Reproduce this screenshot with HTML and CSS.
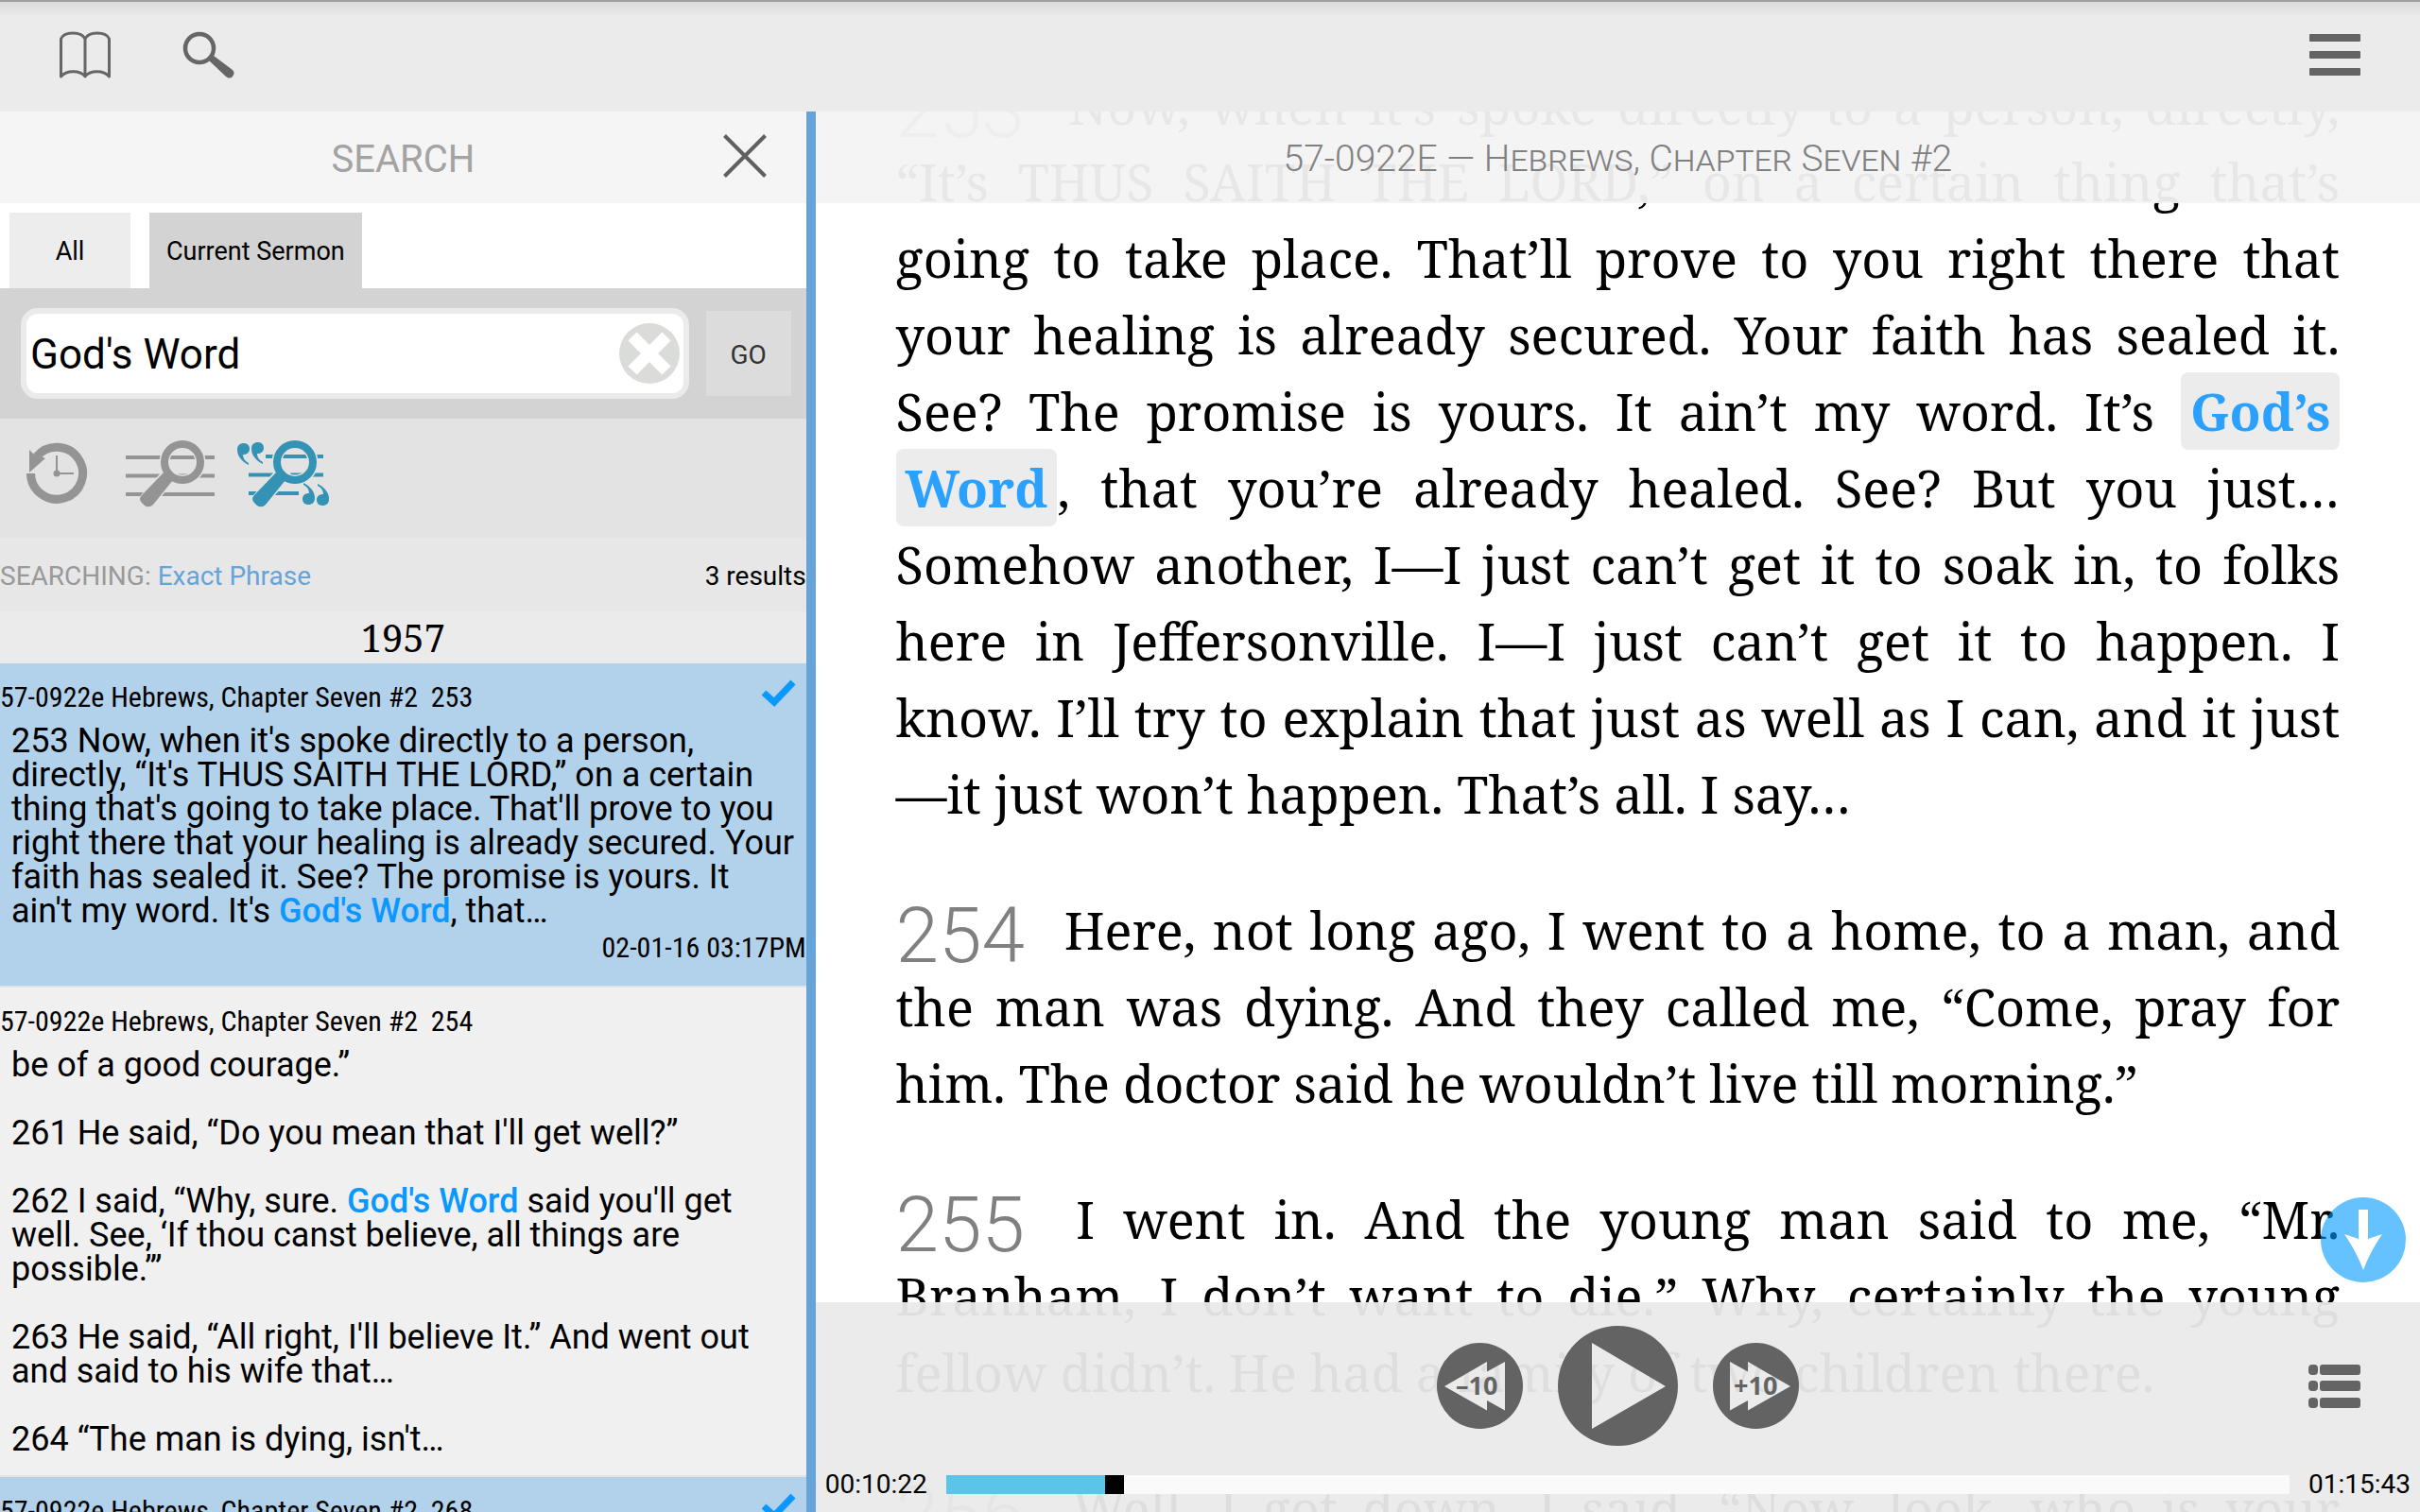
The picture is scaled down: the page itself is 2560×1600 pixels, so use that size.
FILE: index.html
```html
<!DOCTYPE html>
<html lang="en">
<head>
    <meta charset="UTF-8">
    <title>Hebrews, Chapter Seven #2</title>
    <link rel="stylesheet" href="styles.css">
</head>
<body>
    <header class="topbar">
        <button class="icon-btn" aria-label="Library">
            <svg width="54" height="50" viewBox="0 0 54 50" fill="none" stroke="#666" stroke-width="3" stroke-linejoin="round">
                <path d="M27 8C23 0 5 0 1.500 8V48C7 41 22 41 27 48C32 41 47 41 52.500 48V8C49 0 31 0 27 8V48"/>
            </svg>
        </button>
        <button class="icon-btn" aria-label="Search">
            <svg width="56" height="50" viewBox="0 0 56 50">
                <circle cx="18" cy="18" r="15" fill="none" stroke="#666" stroke-width="4.500"/>
                <path d="M28 31L33 26L53 41Q56 44 53 48Q50 51 46 48Z" fill="#666"/>
            </svg>
        </button>
        <button class="icon-btn menu-btn" aria-label="Menu">
            <svg width="54" height="44" viewBox="0 0 54 44" fill="#646464">
                <rect width="54" height="8" rx="1"/>
                <rect y="18" width="54" height="8" rx="1"/>
                <rect y="36" width="54" height="8" rx="1"/>
            </svg>
        </button>
    </header>

    <main class="main">
        <aside class="panel">
            <div class="panel-header">
                <h2>SEARCH</h2>
                <button class="icon-btn close-btn" aria-label="Close">
                    <svg width="46" height="46" viewBox="0 0 46 46" stroke="#606060" stroke-width="4">
                        <path d="M1.500 1.500L44.500 44.500M44.500 1.500L1.500 44.500"/>
                    </svg>
                </button>
            </div>

            <nav class="tabs">
                <button class="tab">All</button>
                <button class="tab active">Current Sermon</button>
            </nav>

            <form class="search-form">
                <div class="search-box">
                    <input type="text" value="God's Word" aria-label="Search text">
                    <button type="button" class="icon-btn" aria-label="Clear">
                        <svg width="64" height="64" viewBox="0 0 64 64">
                            <circle cx="32" cy="32" r="32" fill="#d9dcd9"/>
                            <path d="M14 14L50 50M50 14L14 50" stroke="#fff" stroke-width="13"/>
                        </svg>
                    </button>
                </div>
                <button type="button" class="go-btn">GO</button>
            </form>

            <div class="modes">
                <button class="icon-btn" aria-label="History">
                    <svg width="82" height="72" viewBox="0 0 82 72">
                        <path d="M5.500 35A27.500 27.500 0 1 0 12 17" fill="none" stroke="#949494" stroke-width="9"/>
                        <path d="M4 10L8 14L21 19L4 34Z" fill="#949494"/>
                        <path d="M33 16V35H51" fill="none" stroke="#949494" stroke-width="2"/>
                        <circle cx="33" cy="35" r="3.500" fill="#949494"/>
                    </svg>
                </button>
                <button class="icon-btn" aria-label="All words">
                    <svg width="94" height="72" viewBox="0 0 94 72">
                        <path d="M0 18H94M0 37.500H94M0 57H94" stroke="#949494" stroke-width="4"/>
                        <g fill="none" stroke="#e3e3e3">
                            <circle cx="60" cy="23" r="19" stroke-width="11"/>
                            <path d="M47 36L23 63" stroke-width="17" stroke-linecap="round"/>
                        </g>
                        <circle cx="60" cy="23" r="19" fill="none" stroke="#949494" stroke-width="8"/>
                        <path d="M41 33L50 42L29 68Q25 72 20 69L17 66Q13 62 17 58Z" fill="#949494"/>
                    </svg>
                </button>
                <button class="icon-btn" aria-label="Exact phrase">
                    <svg width="98" height="72" viewBox="0 0 98 72">
                        <path d="M30 17H91M12 36.500H91M12 56H65" stroke="#3492b5" stroke-width="4"/>
                        <g fill="none" stroke="#e3e3e3">
                            <circle cx="61" cy="23" r="19" stroke-width="11"/>
                            <path d="M48 36L24 63" stroke-width="17" stroke-linecap="round"/>
                        </g>
                        <circle cx="61" cy="23" r="19" fill="none" stroke="#3492b5" stroke-width="8"/>
                        <path d="M42 33L51 42L30 68Q26 72 21 69L18 66Q14 62 18 58Z" fill="#3492b5"/>
                        <g fill="#3492b5">
                            <path id="q" d="M12 26C4 22 0 16 0 10C0 5 3 3 7 3C11 3 13 6 13 9C13 13 10 15 6 15C6 19 8 22 12 24Z"/>
                            <use href="#q" x="15" y="-1"/>
                            <use href="#q" transform="translate(82 71) rotate(180)"/>
                            <use href="#q" transform="translate(97 72) rotate(180)"/>
                        </g>
                    </svg>
                </button>
            </div>

            <div class="status">
                <span>SEARCHING: <b>Exact Phrase</b></span>
                <span class="count">3 results</span>
            </div>

            <h3 class="year">1957</h3>

            <article class="result viewed">
                <header>
                    <span>57-0922e Hebrews, Chapter Seven #2&nbsp; 253</span>
                    <svg class="check" width="38" height="30" viewBox="0 0 38 30"><path d="M3 15L14 25L34 4" fill="none" stroke="#0a98ff" stroke-width="7"/></svg>
                </header>
                <p>253 Now, when it's spoke directly to a person, directly, “It's THUS SAITH THE LORD,” on a certain thing that's going to take place. That'll prove to you right there that your healing is already secured. Your faith has sealed it. See? The promise is yours. It ain't my word. It's <mark>God's Word</mark>, that…</p>
                <time>02-01-16 03:17PM</time>
            </article>

            <article class="result">
                <header>
                    <span>57-0922e Hebrews, Chapter Seven #2&nbsp; 254</span>
                </header>
                <p>be of a good courage.”</p>
                <p>261 He said, “Do you mean that I'll get well?”</p>
                <p>262 I said, “Why, sure. <mark>God's Word</mark> said you'll get well. See, ‘If thou canst believe, all things are possible.’”</p>
                <p>263 He said, “All right, I'll believe It.” And went out and said to his wife that…</p>
                <p>264 “The man is dying, isn't…</p>
            </article>

            <article class="result viewed">
                <header>
                    <span>57-0922e Hebrews, Chapter Seven #2&nbsp; 268</span>
                    <svg class="check" width="38" height="30" viewBox="0 0 38 30"><path d="M3 15L14 25L34 4" fill="none" stroke="#0a98ff" stroke-width="7"/></svg>
                </header>
            </article>
        </aside>

        <section class="reader">
            <article class="sermon">
                <p>
                    <span class="line"><span class="num">253</span> Now, when it’s spoke directly to a person, directly,</span>
                    <span class="line">“It’s THUS SAITH THE LORD,” on a certain thing that’s</span>
                    <span class="line">going to take place. That’ll prove to you right there that</span>
                    <span class="line">your healing is already secured. Your faith has sealed it.</span>
                    <span class="line">See? The promise is yours. It ain’t my word. It’s <mark>God’s</mark></span>
                    <span class="line"><mark>Word</mark>, that you’re already healed. See? But you just…</span>
                    <span class="line">Somehow another, I—I just can’t get it to soak in, to folks</span>
                    <span class="line">here in Jeffersonville. I—I just can’t get it to happen. I</span>
                    <span class="line">know. I’ll try to explain that just as well as I can, and it just</span>
                    <span class="line last">—it just won’t happen. That’s all. I say…</span>
                </p>
                <p>
                    <span class="line"><span class="num">254</span> Here, not long ago, I went to a home, to a man, and</span>
                    <span class="line">the man was dying. And they called me, “Come, pray for</span>
                    <span class="line last">him. The doctor said he wouldn’t live till morning.”</span>
                </p>
                <p>
                    <span class="line"><span class="num">255</span> I went in. And the young man said to me, “Mr.</span>
                    <span class="line">Branham, I don’t want to die.” Why, certainly the young</span>
                    <span class="line last">fellow didn’t. He had a family of two children there.</span>
                </p>
                <p>
                    <span class="line"><span class="num">256</span> Well, I got down. I said, “Now, look, who is your</span>
                </p>
            </article>

            <h1 class="title">57-0922E — Hebrews, Chapter Seven #2</h1>

            <button class="icon-btn down-btn" aria-label="Follow along">
                <svg width="90" height="90" viewBox="0 0 90 90">
                    <circle cx="45" cy="45" r="45" fill="#0099ff" fill-opacity="0.6"/>
                    <path d="M40 13H50V44L65 39Q52 58 45 77Q38 58 25 39L40 44Z" fill="#fff"/>
                </svg>
            </button>

            <footer class="player">
                <div class="controls">
                    <div class="transport">
                        <button class="icon-btn" aria-label="Back 10 seconds">
                            <svg width="91" height="91" viewBox="0 0 91 91" fill="#636363">
                                <path fill-rule="evenodd" d="M45.500 0A45.500 45.500 0 1 1 45.500 91A45.500 45.500 0 1 1 45.500 0ZM8 46L53 71.500V61L72 71.500V20L53 30.500V20Z"/>
                                <text x="20" y="55" class="skip">–10</text>
                            </svg>
                        </button>
                        <button class="icon-btn" aria-label="Play">
                            <svg width="127" height="127" viewBox="0 0 127 127" fill="#636363">
                                <path fill-rule="evenodd" d="M63.500 0A63.500 63.500 0 1 1 63.500 127A63.500 63.500 0 1 1 63.500 0ZM36 18V109L114 64Z"/>
                            </svg>
                        </button>
                        <button class="icon-btn" aria-label="Forward 10 seconds">
                            <svg width="91" height="91" viewBox="0 0 91 91" fill="#636363">
                                <path fill-rule="evenodd" d="M45.500 0A45.500 45.500 0 1 1 45.500 91A45.500 45.500 0 1 1 45.500 0ZM82 46L37 71.500V61L18 71.500V20L37 30.500V20Z"/>
                                <text x="22" y="55" class="skip">+10</text>
                            </svg>
                        </button>
                    </div>
                    <button class="icon-btn list-btn" aria-label="Paragraph list">
                        <svg width="55" height="46" viewBox="0 0 55 46" fill="#646464">
                            <rect width="10" height="11" rx="4"/><rect x="12" width="43" height="11" rx="3"/>
                            <rect y="17" width="10" height="11" rx="4"/><rect x="12" y="17" width="43" height="11" rx="3"/>
                            <rect y="35" width="10" height="11" rx="4"/><rect x="12" y="35" width="43" height="11" rx="3"/>
                        </svg>
                    </button>
                </div>
                <div class="progress">
                    <span>00:10:22</span>
                    <input type="range" min="0" max="100" value="12" aria-label="Position">
                    <span>01:15:43</span>
                </div>
            </footer>
        </section>
    </main>
</body>
</html>
```
FILE: styles.css
```css
* {
    box-sizing: border-box;
}
body {
    margin: 0;
    height: 100vh;
    overflow: hidden;
    display: flex;
    flex-direction: column;
    background: white;
    color: black;
    font-family: Roboto, sans-serif;
    font-size: 28px;
}
h1, h2, h3, p {
    margin: 0;
    font-weight: 400;
}
button, input {
    font: inherit;
    color: inherit;
    border: none;
    padding: 0;
    margin: 0;
}
svg {
    display: block;
}
.icon-btn {
    background: none;
    flex-shrink: 0;
}

/* top bar */
.topbar {
    display: flex;
    align-items: center;
    gap: 76px;
    height: 118px;
    flex-shrink: 0;
    padding: 0 63px 4px;
    border-top: 2px solid #a0a0a0;
    background: linear-gradient(#dadada, #ebebeb 16px);
}
.menu-btn {
    margin-left: auto;
}

.main {
    flex: 1;
    min-height: 0;
    display: flex;
}

/* search panel */
.panel {
    width: 33.7%;
    flex-shrink: 0;
    overflow: hidden;
    border-right: 10px solid #66a3d9;
}
.panel-header {
    position: relative;
    display: flex;
    align-items: center;
    justify-content: center;
    height: 97px;
    padding-top: 4px;
    background: #f5f5f5;
}
.panel-header h2 {
    font-size: 40px;
    color: #a3a3a3;
}
.close-btn {
    position: absolute;
    right: 42px;
    top: 24px;
}
.tabs {
    display: flex;
    gap: 20px;
    padding: 10px 10px 0;
}
.tab {
    height: 80px;
    min-width: 128px;
    padding: 2px 18px 0;
    background: #ededed;
    font-size: 27px;
}
.tab.active {
    background: #d3d3d3;
}
.search-form {
    display: flex;
    align-items: center;
    gap: 18px;
    height: 138px;
    padding: 0 16px 0 22px;
    background: #d3d3d3;
}
.search-box {
    flex: 1;
    display: flex;
    align-items: center;
    height: 96px;
    padding: 0 4px;
    background: white;
    border: 6px solid #ebebeb;
    border-radius: 18px;
}
.search-box input {
    flex: 1;
    min-width: 0;
    padding-top: 2px;
    font-size: 44px;
    background: none;
}
.go-btn {
    width: 90px;
    height: 90px;
    padding-top: 2px;
    background: #dcdcdc;
    color: #333;
}
.modes {
    display: flex;
    align-items: flex-start;
    gap: 24px;
    height: 126px;
    padding: 23px 27px;
    background: #e3e3e3;
}
.status {
    display: flex;
    align-items: center;
    justify-content: space-between;
    height: 78px;
    padding-top: 2px;
    background: #e7e7e7;
    color: #999;
}
.status b {
    font-weight: 400;
    color: #66a3d9;
}
.status .count {
    color: black;
}
.year {
    background: #ebebeb;
    text-align: center;
    font-family: "Noto Serif", "Droid Serif", "DejaVu Serif", serif;
    font-size: 40px;
    line-height: 55px;
}

/* results */
.result {
    padding: 16px 0 20px;
    background: #f0f0f0;
    border-bottom: 2px solid #e4e4e4;
}
.result.viewed {
    background: #b2d1ea;
}
.result header {
    display: flex;
    justify-content: space-between;
    padding-right: 10px;
    font-family: "Roboto Condensed", Roboto, sans-serif;
    font-size: 30px;
    line-height: 40px;
    margin-bottom: 8px;
}
.result p {
    padding: 0 8px 0 12px;
    font-size: 36px;
    line-height: 36px;
}
.result p + p {
    margin-top: 36px;
}
.result mark {
    background: none;
    color: #0a98ff;
    font-weight: 500;
}
.result time {
    display: block;
    text-align: right;
    font-family: "Roboto Condensed", Roboto, sans-serif;
    font-size: 30px;
    line-height: 41px;
}

/* sermon text */
.reader {
    position: relative;
    flex: 1;
    min-width: 0;
    overflow: hidden;
}
.sermon {
    margin-top: -47px;
    padding: 0 5%;
    font-family: "Noto Serif", "Droid Serif", "DejaVu Serif", serif;
    font-size: 54px;
    line-height: 81px;
}
.sermon p {
    margin-bottom: 63px;
}
.line {
    display: block;
    text-align-last: justify;
}
.line.last {
    text-align-last: left;
}
.num {
    margin-right: 24px;
    font-family: Roboto, sans-serif;
    font-weight: 300;
    font-size: 82px;
    line-height: 0;
    vertical-align: -13px;
    color: #808080;
}
.sermon mark {
    padding: 4px 10px;
    border-radius: 8px;
    background: #ececec;
    color: #2aa1ff;
    font-weight: 700;
}
.title {
    position: absolute;
    top: 0;
    left: 0;
    right: 0;
    height: 97px;
    padding-top: 4px;
    background: rgba(243, 243, 243, 0.95);
    text-align: center;
    font-size: 39px;
    font-weight: 300;
    font-variant: small-caps;
    line-height: 92px;
    color: #808080;
}
.down-btn {
    position: absolute;
    right: 15px;
    bottom: 243px;
}

/* player */
.player {
    position: absolute;
    left: 0;
    right: 0;
    bottom: 0;
    height: 222px;
    padding-top: 25px;
    background: rgba(234, 234, 234, 0.95);
}
.controls {
    display: flex;
    align-items: center;
    justify-content: center;
}
.transport {
    display: flex;
    align-items: center;
    gap: 37px;
}
.skip {
    font-family: "Open Sans", sans-serif;
    font-size: 27px;
    font-weight: 700;
}
.list-btn {
    position: absolute;
    right: 63px;
}
.progress {
    display: flex;
    align-items: center;
    gap: 20px;
    margin-top: 24px;
    padding: 0 10px;
}
.progress input {
    flex: 1;
    min-width: 0;
    height: 20px;
    appearance: none;
    background: linear-gradient(to right, #5bc4e8 12%, #fafafa 12%);
}
.progress input::-webkit-slider-thumb {
    appearance: none;
    width: 20px;
    height: 20px;
    background: black;
}
```
